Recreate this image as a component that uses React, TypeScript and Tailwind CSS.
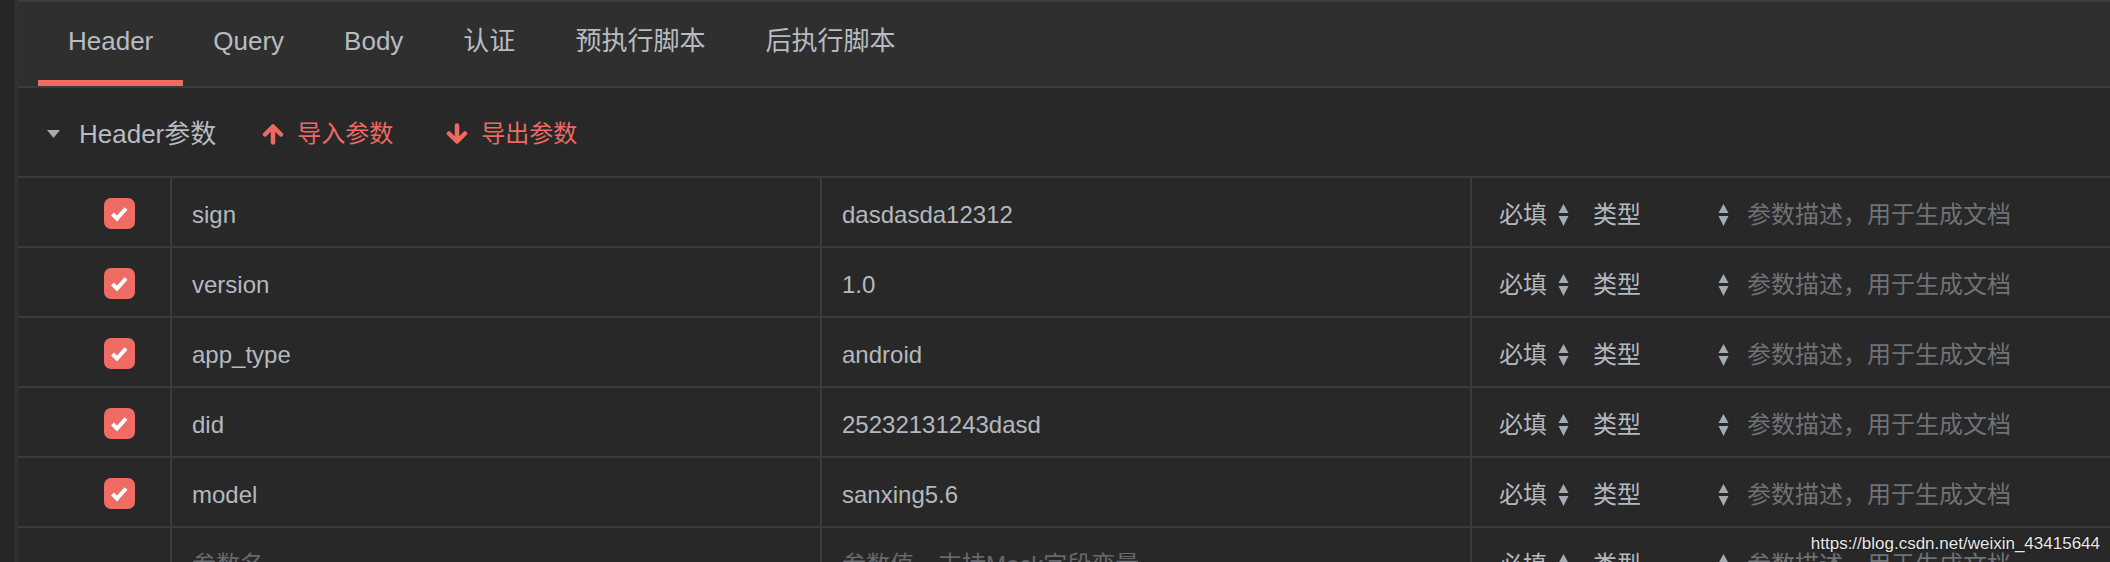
import React from "react";

const FONT = "font-['Liberation_Sans','Noto_Sans_CJK_SC',sans-serif]";

interface HeaderParam {
  name: string;
  value: string;
}

const params: HeaderParam[] = [
  { name: "sign", value: "dasdasda12312" },
  { name: "version", value: "1.0" },
  { name: "app_type", value: "android" },
  { name: "did", value: "25232131243dasd" },
  { name: "model", value: "sanxing5.6" },
];

const tabs = ["Header", "Query", "Body", "认证", "预执行脚本", "后执行脚本"];

const SortArrows = () => (
  <svg width="11" height="22" viewBox="0 0 11 22" className="shrink-0">
    <path d="M5.5 0 L10.5 9 L0.5 9 Z" fill="#a3abb3" />
    <path d="M0.5 12 L10.5 12 L5.5 22 Z" fill="#a3abb3" />
  </svg>
);

const ArrowIcon = ({ down }: { down?: boolean }) => (
  <svg
    width="22"
    height="22"
    viewBox="0 0 22 22"
    className={down ? "rotate-180 shrink-0" : "shrink-0"}
  >
    <path
      d="M11 19.5 L11 4 M3 11.5 L11 3.5 L19 11.5"
      stroke="#ee6a61"
      strokeWidth="4.5"
      strokeLinecap="round"
      strokeLinejoin="round"
      fill="none"
    />
  </svg>
);

const Checkbox = () => (
  <div className="w-[31px] h-[31px] rounded-[7px] bg-[#ef6c64] flex items-center justify-center">
    <svg width="31" height="31" viewBox="0 0 31 31">
      <path
        d="M8.5 16 L13 20.5 L22 10.5"
        stroke="#ffffff"
        strokeWidth="4"
        fill="none"
      />
    </svg>
  </div>
);

const TailCells = () => (
  <div className="flex-1 flex items-center pl-[27px] pt-[5px]">
    <span className="text-[#b4b9bf]">必填</span>
    <span className="ml-[11px]">
      <SortArrows />
    </span>
    <div className="ml-[24px] w-[136px] flex items-center justify-between">
      <span className="text-[#b4b9bf]">类型</span>
      <SortArrows />
    </div>
    <span className="ml-[18px] text-[#6f7276]">参数描述，用于生成文档</span>
  </div>
);

const App = () => {
  return (
    <div
      className={`relative w-[2110px] h-[562px] overflow-hidden flex bg-[#262626] text-[24px] ${FONT}`}
    >
      <div className="w-[14px] shrink-0 bg-[#262626]" />
      <div className="flex-1 flex flex-col border-l-4 border-[#303030] bg-[#282828]">
        {/* tabs */}
        <div className="h-[88px] shrink-0 flex pl-[20px] bg-[#2f2f2f] border-t-2 border-b-2 border-[#3b3b3b]">
          {tabs.map((tab, i) => (
            <div
              key={tab}
              className={`h-full flex items-center px-[30px] text-[26px] text-[#b7bcc2] border-b-[6px] ${
                i === 0 ? "border-[#ef6b63]" : "border-transparent"
              }`}
            >
              {tab}
            </div>
          ))}
        </div>

        {/* section header */}
        <div className="h-[90px] shrink-0 flex items-center pl-[29px] pt-[4px] border-b-2 border-[#3b3b3b]">
          <svg width="13" height="8" viewBox="0 0 13 8">
            <path d="M0 0 L13 0 L6.5 8 Z" fill="#a7adb3" />
          </svg>
          <span className="ml-[19px] text-[26px] text-[#b7bcc2]">Header参数</span>
          <div className="ml-[46px] flex items-center">
            <ArrowIcon />
            <span className="ml-[13px] text-[#ee6a61]">导入参数</span>
          </div>
          <div className="ml-[53px] flex items-center">
            <ArrowIcon down />
            <span className="ml-[13px] text-[#ee6a61]">导出参数</span>
          </div>
        </div>

        {/* rows */}
        {params.map((p) => (
          <div
            key={p.name}
            className="h-[70px] shrink-0 flex border-b-2 border-[#3b3b3b]"
          >
            <div className="w-[154px] flex items-center justify-end pr-[35px] pt-[3px] border-r-2 border-[#3b3b3b]">
              <Checkbox />
            </div>
            <div className="w-[650px] flex items-center pl-[20px] pt-[5px] text-[#b4b9bf] border-r-2 border-[#3b3b3b]">
              {p.name}
            </div>
            <div className="w-[650px] flex items-center pl-[20px] pt-[5px] text-[#b4b9bf] border-r-2 border-[#3b3b3b]">
              {p.value}
            </div>
            <TailCells />
          </div>
        ))}

        {/* empty row */}
        <div className="h-[70px] shrink-0 flex border-b-2 border-[#3b3b3b]">
          <div className="w-[154px] border-r-2 border-[#3b3b3b]" />
          <div className="w-[650px] flex items-center pl-[20px] pt-[5px] text-[#66696d] border-r-2 border-[#3b3b3b]">
            参数名
          </div>
          <div className="w-[650px] flex items-center pl-[20px] pt-[5px] text-[#66696d] border-r-2 border-[#3b3b3b]">
            参数值，支持Mock字段变量
          </div>
          <TailCells />
        </div>
      </div>

      <div className="absolute right-[10px] bottom-[10px] text-[17px] leading-none text-[#e8e8e8] [text-shadow:0_0_2px_#000]">
        https://blog.csdn.net/weixin_43415644
      </div>
    </div>
  );
};

export default App;
